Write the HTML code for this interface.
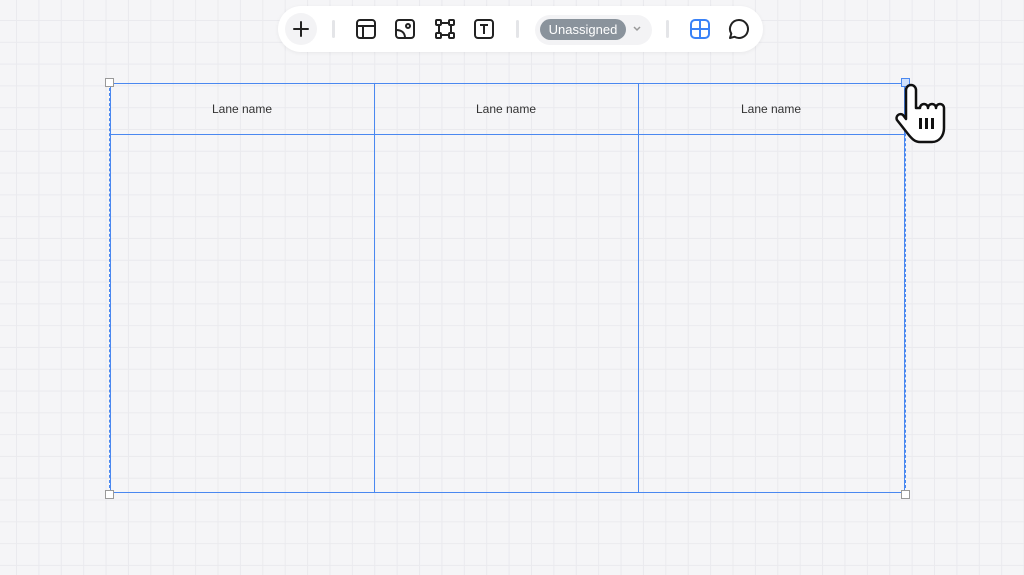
<!DOCTYPE html>
<html><head><style>
html,body{margin:0;padding:0;width:1024px;height:575px;overflow:hidden}
body{background-color:#f5f5f7;background-image:linear-gradient(#eaeaee 1px,transparent 1px),linear-gradient(90deg,#eaeaee 1px,transparent 1px);background-size:22.4px 21.8px;background-position:16px 20px;font-family:"Liberation Sans",sans-serif;position:relative}
.tb{position:absolute;left:278px;top:6px;width:485px;height:46px;background:#fff;border-radius:23px;box-shadow:0 1px 4px rgba(0,0,0,.06)}
.a{position:absolute}
.div{position:absolute;top:14px;width:3px;height:18px;background:#e4e5e8;border-radius:2px}
.lane{position:absolute;top:83px;height:410px;border:1px solid #4a88f0;box-sizing:border-box}
.hdr{position:absolute;left:110px;top:134px;width:795px;height:1px;background:#4a88f0}
.lbl{position:absolute;top:102px;font-size:12px;color:#333;width:264px;text-align:center}
.h{position:absolute;width:7px;height:7px;background:#fff;border:1px solid #999}
</style></head><body>
<div class="lane" style="left:109px;width:797px;border-style:dashed"></div>
<div class="lane" style="left:110px;width:795px"></div>
<div class="a" style="left:374px;top:83px;width:1px;height:410px;background:#4a88f0"></div>
<div class="a" style="left:638px;top:83px;width:1px;height:410px;background:#4a88f0"></div>
<div class="hdr"></div>
<div class="lbl" style="left:110px">Lane name</div>
<div class="lbl" style="left:374px">Lane name</div>
<div class="lbl" style="left:639px">Lane name</div>
<div class="h" style="left:105px;top:78px"></div>
<div class="h" style="left:105px;top:490px"></div>
<div class="h" style="left:901px;top:490px"></div>
<div class="h" style="left:901px;top:78px;background:#cfe0fb;border-color:#4a88f0"></div>
<svg class="a" style="left:892px;top:82px" width="56" height="66" viewBox="0 0 56 66">
<path d="M14 8 a5 5 0 0 1 10 0 V26 h4 a4 4 0 0 1 8 0 a4 4 0 0 1 8 0 a4 4 0 0 1 8 0 V46 c0 8 -5 14 -12 14 H28 c-5 0 -8 -3 -12 -8 L5 38 a4 4 0 0 1 6 -5 L14 37 Z" fill="#fff" stroke="#111" stroke-width="2.5" stroke-linejoin="round"/>
<rect x="27" y="36" width="3" height="11" fill="#111"/><rect x="33" y="36" width="3" height="11" fill="#111"/><rect x="39" y="36" width="3" height="11" fill="#111"/>
</svg>
<div class="tb">
<div class="a" style="left:7px;top:7px;width:32px;height:32px;border-radius:16px;background:#f3f3f5"></div>
<svg class="a" style="left:13px;top:13px" width="20" height="20"><path d="M10 3v14M3 10h14" stroke="#222" stroke-width="2" stroke-linecap="round"/></svg>
<div class="div" style="left:54px"></div>
<svg class="a" style="left:77px;top:12px" width="22" height="22" fill="none" stroke="#222" stroke-width="2"><rect x="2" y="2" width="18" height="18" rx="3"/><path d="M2 8h18M8 8v12"/></svg>
<svg class="a" style="left:116px;top:12px" width="22" height="22" fill="none" stroke="#222" stroke-width="2"><rect x="2" y="2" width="18" height="18" rx="3"/><circle cx="14" cy="8" r="2"/><path d="M2 12c6 0 9 3 9 8"/></svg>
<svg class="a" style="left:156px;top:12px" width="22" height="22" fill="none" stroke="#222" stroke-width="2"><rect x="5" y="5" width="12" height="12"/><rect x="2" y="2" width="5" height="5" rx="1" fill="#fff"/><rect x="15" y="2" width="5" height="5" rx="1" fill="#fff"/><rect x="2" y="15" width="5" height="5" rx="1" fill="#fff"/><rect x="15" y="15" width="5" height="5" rx="1" fill="#fff"/></svg>
<svg class="a" style="left:195px;top:12px" width="22" height="22" fill="none" stroke="#222" stroke-width="2"><rect x="2" y="2" width="18" height="18" rx="3"/><path d="M7 7h8M11 7v9"/></svg>
<div class="div" style="left:238px"></div>
<div class="a" style="left:257px;top:9px;width:117px;height:30px;border-radius:15px;background:#f3f3f5"></div>
<div class="a" style="left:262px;top:13px;width:86px;height:21px;border-radius:11px;background:#8a939c;color:#fff;font-size:13px;line-height:21px;text-align:center">Unassigned</div>
<svg class="a" style="left:354px;top:19px" width="10" height="8"><path d="M2 2l3 3 3-3" stroke="#999" stroke-width="1.5" fill="none"/></svg>
<div class="div" style="left:388px"></div>
<svg class="a" style="left:411px;top:12px" width="22" height="22" fill="none" stroke="#3a82f7" stroke-width="2"><rect x="2" y="2" width="18" height="18" rx="4"/><path d="M11 2v18M2 11h18"/></svg>
<svg class="a" style="left:450px;top:12px" width="22" height="22" fill="none" stroke="#222" stroke-width="2"><path d="M11 2a9 9 0 1 1-4.5 16.8L2 20l1.3-4.3A9 9 0 0 1 11 2z" stroke-linejoin="round"/></svg>
</div>
</body></html>
